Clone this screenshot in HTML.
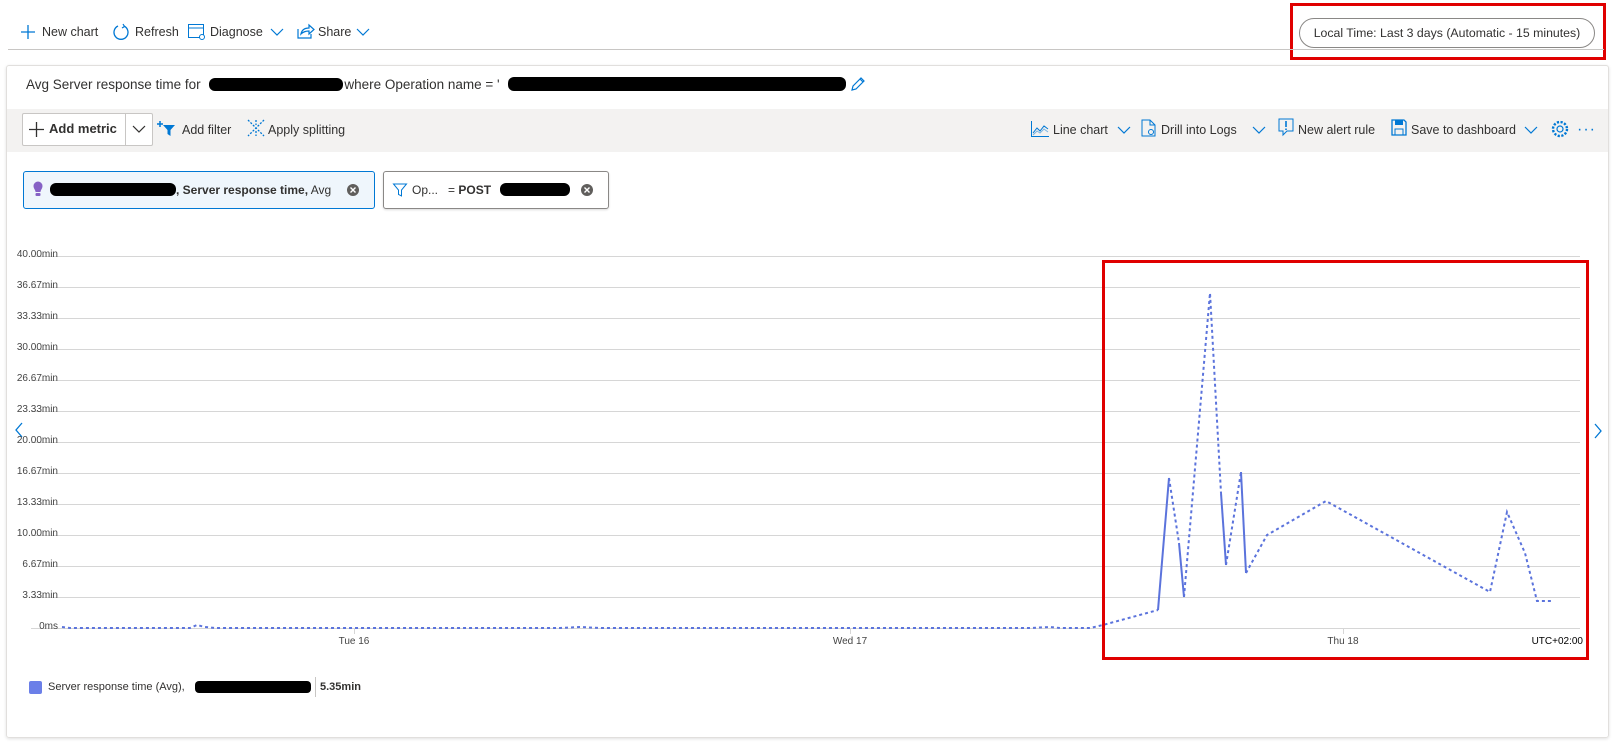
<!DOCTYPE html>
<html><head><meta charset="utf-8"><style>
*{margin:0;padding:0;box-sizing:border-box}
body{width:1616px;height:742px;background:#fff;font-family:"Liberation Sans",sans-serif;color:#323130;position:relative;overflow:hidden;font-size:13px}
.a{position:absolute;white-space:nowrap}
.t{font-size:12.5px;line-height:16px}
svg{position:absolute;overflow:visible}
.blk{position:absolute;background:#000;border-radius:6px}
.yl{position:absolute;right:1558px;font-size:10px;color:#444;text-align:right;width:50px}
</style></head><body>

<!-- top toolbar -->
<svg style="left:20px;top:24px" width="16" height="16"><path d="M8 1V15M1 8H15" stroke="#0078d4" stroke-width="1.3"/></svg>
<div class="a t" style="left:42px;top:24px">New chart</div>
<svg style="left:112px;top:23px" width="18" height="18"><path d="M6 3A7 7 0 1 0 12 3" fill="none" stroke="#0078d4" stroke-width="1.3"/><path d="M11 1L12.5 3.5L10 5" fill="none" stroke="#0078d4" stroke-width="1.2"/></svg>
<div class="a t" style="left:135px;top:24px">Refresh</div>
<svg style="left:188px;top:24px" width="18" height="16"><rect x="0.5" y="0.5" width="15" height="13" fill="none" stroke="#0078d4"/><path d="M0.5 4H15.5" stroke="#0078d4"/><circle cx="14" cy="13" r="2.5" fill="#fff" stroke="#0078d4"/></svg>
<div class="a t" style="left:210px;top:24px">Diagnose</div>
<svg style="left:270px;top:28px" width="14" height="8"><path d="M1 1L7 7L13 1" fill="none" stroke="#0078d4" stroke-width="1.2"/></svg>
<svg style="left:297px;top:23px" width="18" height="16"><path d="M1 6V15H14V11" fill="none" stroke="#0078d4" stroke-width="1.2"/><path d="M4 11C5 6 9 5 12 5V2L17 6.5L12 11V8C9 8 6 9 4 11Z" fill="none" stroke="#0078d4" stroke-width="1.2"/></svg>
<div class="a t" style="left:318px;top:24px">Share</div>
<svg style="left:356px;top:28px" width="14" height="8"><path d="M1 1L7 7L13 1" fill="none" stroke="#0078d4" stroke-width="1.2"/></svg>

<div class="a" style="left:1299px;top:18px;width:296px;height:30px;border:1px solid #8a8886;border-radius:15px;font-size:12.3px;line-height:28px;text-align:center">Local Time: Last 3 days (Automatic - 15 minutes)</div>
<div class="a" style="left:1290px;top:3px;width:316px;height:57px;border:3px solid #e00000"></div>

<div class="a" style="left:8px;top:49px;width:1596px;height:1px;background:#c8c6c4"></div>

<!-- card -->
<div class="a" style="left:6px;top:65px;width:1603px;height:673px;border:1px solid #e1dfdd;border-radius:3px;box-shadow:0 1px 3px rgba(0,0,0,.12)"></div>
<div class="a" style="left:26px;top:76px;font-size:13.5px;line-height:18px">Avg Server response time for <span style="display:inline-block;width:140px"></span>where Operation name = '</div>
<div class="blk" style="left:209px;top:78px;width:134px;height:13px"></div>
<div class="blk" style="left:508px;top:77px;width:338px;height:14px"></div>
<svg style="left:850px;top:76px" width="16" height="16"><path d="M2 14L3 10L11 2L14 5L6 13Z M10 3L13 6" fill="none" stroke="#0078d4" stroke-width="1.2"/></svg>

<!-- gray band -->
<div class="a" style="left:7px;top:109px;width:1601px;height:43px;background:#f3f2f1"></div>
<div class="a" style="left:22px;top:113px;width:131px;height:33px;background:#fff;border:1px solid #c8c6c4;border-radius:2px"></div>
<div class="a" style="left:125px;top:113px;width:1px;height:33px;background:#c8c6c4"></div>
<svg style="left:29px;top:122px" width="15" height="15"><path d="M7.5 0V15M0 7.5H15" stroke="#323130" stroke-width="1.3"/></svg>
<div class="a" style="left:49px;top:121px;font-size:13px;font-weight:bold;line-height:16px">Add metric</div>
<svg style="left:132px;top:125px" width="14" height="8"><path d="M1 1L7 7L13 1" fill="none" stroke="#323130" stroke-width="1.2"/></svg>
<svg style="left:157px;top:119px" width="20" height="18"><path d="M3 2V8M0 5H6" stroke="#0078d4" stroke-width="1.5"/><path d="M6 6H18L13.5 11V17L10.5 15V11Z" fill="#0078d4"/></svg>
<div class="a t" style="left:182px;top:122px">Add filter</div>
<svg style="left:247px;top:119px" width="18" height="18" stroke="#0078d4" stroke-width="1.3" stroke-dasharray="2 1.5"><path d="M1 1L17 17M17 1L1 17M9 1V6M9 12V17"/></svg>
<div class="a t" style="left:268px;top:122px">Apply splitting</div>

<svg style="left:1031px;top:121px" width="18" height="16"><path d="M0.5 0V15.5H18" fill="none" stroke="#0078d4"/><path d="M2 12L6 7L9 10L13 5L17 8" fill="none" stroke="#0078d4"/><path d="M2 14L6 10L9 12L13 8L17 11" fill="none" stroke="#0078d4" opacity=".5"/></svg>
<div class="a t" style="left:1053px;top:122px">Line chart</div>
<svg style="left:1117px;top:126px" width="14" height="8"><path d="M1 1L7 7L13 1" fill="none" stroke="#0078d4" stroke-width="1.2"/></svg>
<svg style="left:1141px;top:119px" width="16" height="18"><path d="M1 1H9L14 6V17H1Z M9 1V6H14" fill="none" stroke="#0078d4"/><circle cx="10" cy="13" r="2.5" fill="none" stroke="#0078d4"/></svg>
<div class="a t" style="left:1161px;top:122px">Drill into Logs</div>
<svg style="left:1252px;top:126px" width="14" height="8"><path d="M1 1L7 7L13 1" fill="none" stroke="#0078d4" stroke-width="1.2"/></svg>
<svg style="left:1278px;top:118px" width="16" height="19"><path d="M1 1H15V13H9L5 17V13H1Z" fill="none" stroke="#0078d4"/><path d="M8 3V9M8 10.5V12" stroke="#0078d4" stroke-width="1.6"/></svg>
<div class="a t" style="left:1298px;top:122px">New alert rule</div>
<svg style="left:1391px;top:119px" width="16" height="17"><path d="M1 1H13L15 3V16H1Z" fill="none" stroke="#0078d4" stroke-width="1.3"/><rect x="4" y="1" width="8" height="5" fill="#0078d4"/><rect x="4" y="10" width="8" height="6" fill="none" stroke="#0078d4"/></svg>
<div class="a t" style="left:1411px;top:122px">Save to dashboard</div>
<svg style="left:1524px;top:126px" width="14" height="8"><path d="M1 1L7 7L13 1" fill="none" stroke="#0078d4" stroke-width="1.2"/></svg>
<svg style="left:1551px;top:120px" width="18" height="18"><circle cx="9" cy="9" r="3" fill="none" stroke="#0078d4" stroke-width="1.2"/><circle cx="9" cy="9" r="7" fill="none" stroke="#0078d4" stroke-width="2.4" stroke-dasharray="2.2 1.5"/></svg>
<div class="a" style="left:1577px;top:121px;font-size:16px;color:#0078d4;letter-spacing:1px">···</div>

<!-- pills -->
<div class="a" style="left:23px;top:171px;width:352px;height:38px;background:#eff6fc;border:1px solid #0078d4;border-radius:3px"></div>
<svg style="left:33px;top:181px" width="10" height="16"><path d="M5 0.5A4.5 4.5 0 0 1 9.5 5C9.5 7.5 7.5 9 7.5 11H2.5C2.5 9 0.5 7.5 0.5 5A4.5 4.5 0 0 1 5 0.5Z" fill="#8661c5"/><rect x="2.5" y="12" width="5" height="3" rx="1" fill="#8661c5"/></svg>
<div class="blk" style="left:50px;top:183px;width:126px;height:13px"></div>
<div class="a" style="left:176px;top:182px;font-size:12px;line-height:16px"><b>, Server response time,</b> Avg</div>
<svg style="left:347px;top:184px" width="12" height="12"><circle cx="6" cy="6" r="6" fill="#605e5c"/><path d="M3.5 3.5L8.5 8.5M8.5 3.5L3.5 8.5" stroke="#fff" stroke-width="1.4"/></svg>

<div class="a" style="left:383px;top:171px;width:226px;height:38px;background:#fff;border:1px solid #8a8886;border-radius:3px;box-shadow:0 1px 2px rgba(0,0,0,.15)"></div>
<svg style="left:393px;top:183px" width="14" height="14"><path d="M0.5 1H13.5L8.5 7V13L5.5 11.5V7Z" fill="none" stroke="#0078d4"/></svg>
<div class="a" style="left:412px;top:182px;font-size:12px;line-height:16px">Op...&nbsp;&nbsp;&nbsp;= <b>POST</b></div>
<div class="blk" style="left:500px;top:183px;width:70px;height:13px"></div>
<svg style="left:581px;top:184px" width="12" height="12"><circle cx="6" cy="6" r="6" fill="#605e5c"/><path d="M3.5 3.5L8.5 8.5M8.5 3.5L3.5 8.5" stroke="#fff" stroke-width="1.4"/></svg>

<!-- chart -->
<svg style="left:0;top:0" width="1616" height="742">
<g stroke="#d6d6d6" stroke-width="1">
<path d="M31 256.5H1580M31 287.5H1580M31 318.5H1580M31 349.5H1580M31 380.5H1580M31 411.5H1580M31 442.5H1580M31 473.5H1580M31 504.5H1580M31 535.5H1580M31 566.5H1580M31 597.5H1580M31 628.5H1580"/>
<path d="M354.5 629V634M850.5 629V634M1343.5 629V634"/>
</g>
<g fill="none" stroke="#5b73dc" stroke-width="2">
<path stroke-dasharray="3 3" d="M62 627L70 628L190 628L197 625L205 627L215 628L560 628L580 627L600 628L1030 628L1050 627L1060 628L1090 628L1103 625L1158 610"/>
<path d="M1158 610L1169 478"/>
<path stroke-dasharray="3 3" d="M1169 478L1179 543"/>
<path d="M1179 543L1184 597"/>
<path stroke-dasharray="3 3" d="M1184 597L1210 293L1221 493"/>
<path d="M1221 493L1226 565"/>
<path stroke-dasharray="3 3" d="M1226 565L1241 472"/>
<path d="M1241 472L1246 573"/>
<path stroke-dasharray="3 3" d="M1246 573L1267 535L1326 501L1490 592L1507 512L1525 553L1537 601L1553 601"/>
</g>
<path d="M22 423L16 430L22 437" fill="none" stroke="#0078d4" stroke-width="1.3"/>
<path d="M1595 424L1601 431L1595 438" fill="none" stroke="#0078d4" stroke-width="1.3"/>
</svg>
<div class="yl" style="top:249px">40.00min</div>
<div class="yl" style="top:280px">36.67min</div>
<div class="yl" style="top:311px">33.33min</div>
<div class="yl" style="top:342px">30.00min</div>
<div class="yl" style="top:373px">26.67min</div>
<div class="yl" style="top:404px">23.33min</div>
<div class="yl" style="top:435px">20.00min</div>
<div class="yl" style="top:466px">16.67min</div>
<div class="yl" style="top:497px">13.33min</div>
<div class="yl" style="top:528px">10.00min</div>
<div class="yl" style="top:559px">6.67min</div>
<div class="yl" style="top:590px">3.33min</div>
<div class="yl" style="top:621px">0ms</div>
<div class="a" style="left:334px;top:636px;width:40px;text-align:center;font-size:10px;color:#444">Tue 16</div>
<div class="a" style="left:830px;top:636px;width:40px;text-align:center;font-size:10px;color:#444">Wed 17</div>
<div class="a" style="left:1323px;top:636px;width:40px;text-align:center;font-size:10px;color:#444">Thu 18</div>
<div class="a" style="left:1523px;top:636px;width:60px;text-align:right;font-size:10px;color:#000">UTC+02:00</div>
<div class="a" style="left:1102px;top:260px;width:487px;height:400px;border:3px solid #e00000"></div>

<!-- legend -->
<div class="a" style="left:29px;top:681px;width:13px;height:13px;background:#6b7fe8;border-radius:2px"></div>
<div class="a" style="left:48px;top:680px;font-size:11px;line-height:14px">Server response time (Avg),</div>
<div class="blk" style="left:195px;top:681px;width:116px;height:12px;border-radius:4px"></div>
<div class="a" style="left:315px;top:677px;width:1px;height:20px;background:#c8c6c4"></div>
<div class="a" style="left:320px;top:680px;font-size:11px;line-height:14px;font-weight:bold">5.35min</div>
</body></html>
